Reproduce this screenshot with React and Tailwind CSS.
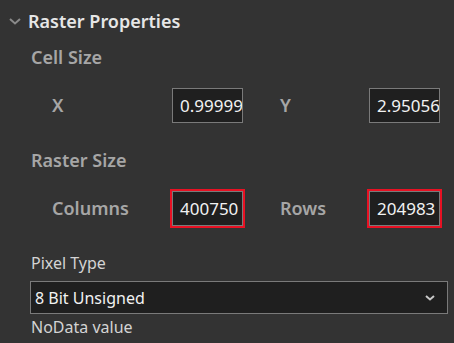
const font = { fontFamily: '"Noto Sans", "Open Sans", sans-serif' };

const ValueBox = ({ value, invalid }) => {
  const box = (
    <div className="w-[71px] h-[35px] border border-[#7a7a7a] bg-[#1f1f1f] overflow-hidden flex items-center pl-[7px] text-[17px] text-[#f2f2f2] whitespace-nowrap">
      {value}
    </div>
  );
  if (!invalid) return box;
  return <div className="border-2 border-[#e81123] -m-[2px]">{box}</div>;
};

const PairRow = ({ a, av, b, bv, invalid, className }) => (
  <div className={"flex items-center h-[35px] pl-[52px] " + className}>
    <div className="w-[120px] text-[18px] font-semibold text-[#a6a6a6]">{a}</div>
    <ValueBox value={av} invalid={invalid} />
    <div className="w-[126px] pl-[37px] text-[18px] font-semibold text-[#a6a6a6]">{b}</div>
    <ValueBox value={bv} invalid={invalid} />
  </div>
);

export default function App() {
  return (
    <div className="w-[454px] h-[343px] bg-[#333333] overflow-hidden" style={font}>
      <div className="flex items-center h-[22px] mt-[10px]">
        <svg width="12" height="7" viewBox="0 0 12 7" className="ml-[9px] mr-[7px]">
          <path d="M1 1 L6 5.5 L11 1" stroke="#8a8a8a" strokeWidth="2" fill="none" />
        </svg>
        <span className="text-[18px] font-semibold text-[#e6e6e6] leading-none">Raster Properties</span>
      </div>
      <div className="pl-[31px] mt-[14px] text-[18px] font-semibold text-[#a6a6a6] leading-[22px]">Cell Size</div>
      <PairRow a="X" av="0.99999999" b="Y" bv="2.950561234" className="mt-[20px]" />
      <div className="pl-[31px] mt-[26px] text-[18px] font-semibold text-[#a6a6a6] leading-[22px]">Raster Size</div>
      <PairRow a="Columns" av="400750" b="Rows" bv="204983" invalid className="mt-[20px]" />
      <div className="pl-[31px] mt-[26px] text-[16px] text-[#d4d4d4] leading-[22px]">Pixel Type</div>
      <div className="ml-[30px] mr-[6px] mt-[7px] h-[33px] border border-[#7a7a7a] bg-[#1f1f1f] flex items-center justify-between pl-[4px] pr-[12px]">
        <span className="text-[16px] text-[#f2f2f2]">8 Bit Unsigned</span>
        <svg width="10" height="6" viewBox="0 0 10 6">
          <path d="M1 1 L5 4.5 L9 1" stroke="#c8c8c8" strokeWidth="2" fill="none" />
        </svg>
      </div>
      <div className="pl-[31px] mt-[2px] text-[16px] text-[#d4d4d4] leading-[22px]">NoData value</div>
    </div>
  );
}
